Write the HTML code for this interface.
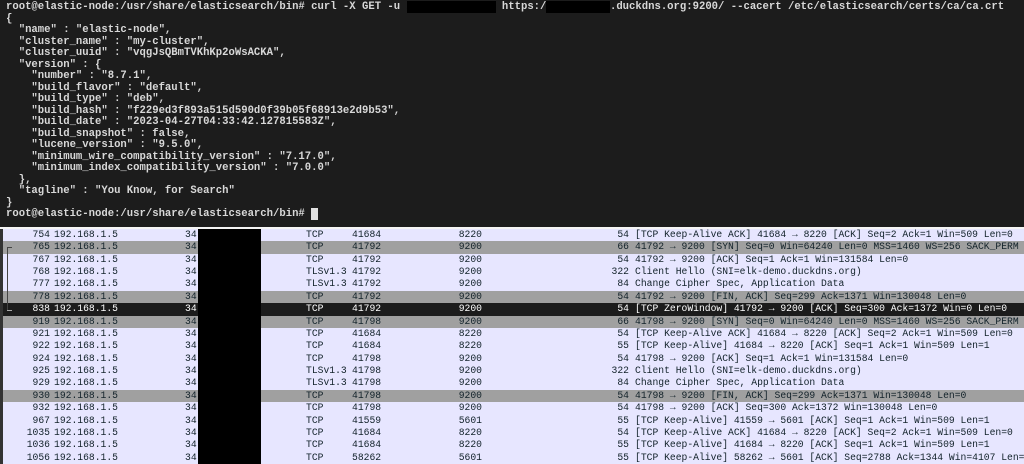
<!DOCTYPE html>
<html><head><style>
body{margin:0;width:1024px;height:464px;overflow:hidden;background:#fff;position:relative}
#term{position:absolute;left:0;top:0;width:1024px;height:227px;background:#1c1c1c;color:#d8d8d8;font:bold 10.6px/11.5px "Liberation Mono",monospace;white-space:pre;padding:2px 0 0 6px;box-sizing:border-box}
.blk{background:#000;color:#000}
#ws{position:absolute;left:0;top:229px;width:1024px;height:235px;background:#e7e6ff}
.r{position:absolute;left:3px;width:1021px;height:12.37px;font:9.7px/12.4px "Liberation Mono",monospace;color:#12222a;white-space:pre}
.r span{position:absolute;top:0}
.g{background:#a0a0a0}
.s{background:#1c1c1c;color:#fff}
</style></head><body>
<div id="term">root@elastic-node:/usr/share/elasticsearch/bin# curl -X GET -u <span class="blk">xxxxxxxxxxxxxx</span> https:/<span class="blk">xxxxxxxxxx</span>.duckdns.org:9200/ --cacert /etc/elasticsearch/certs/ca/ca.crt
{
  "name" : "elastic-node",
  "cluster_name" : "my-cluster",
  "cluster_uuid" : "vqgJsQBmTVKhKp2oWsACKA",
  "version" : {
    "number" : "8.7.1",
    "build_flavor" : "default",
    "build_type" : "deb",
    "build_hash" : "f229ed3f893a515d590d0f39b05f68913e2d9b53",
    "build_date" : "2023-04-27T04:33:42.127815583Z",
    "build_snapshot" : false,
    "lucene_version" : "9.5.0",
    "minimum_wire_compatibility_version" : "7.17.0",
    "minimum_index_compatibility_version" : "7.0.0"
  },
  "tagline" : "You Know, for Search"
}
root@elastic-node:/usr/share/elasticsearch/bin# <span style="background:#e0e0e0"> </span></div>
<div style="position:absolute;left:0;top:227px;width:1024px;height:2px;background:#f4f4f4"></div>
<div id="ws"></div>
<div style="position:absolute;left:0;top:229px;width:3px;height:235px;background:#333"></div>
<div id="rows"></div>
<div style="position:absolute;left:198px;top:229px;width:63px;height:235px;background:#000"></div>
<div style="position:absolute;left:7px;top:247px;width:1px;height:63px;background:#444"></div>
<div style="position:absolute;left:7px;top:247px;width:5px;height:1px;background:#444"></div>
<div style="position:absolute;left:7px;top:310px;width:5px;height:1px;background:#aaa"></div>
<script>
var d=[
["754","41684","8220","TCP","54","[TCP Keep-Alive ACK] 41684 → 8220 [ACK] Seq=2 Ack=1 Win=509 Len=0",""],
["765","41792","9200","TCP","66","41792 → 9200 [SYN] Seq=0 Win=64240 Len=0 MSS=1460 WS=256 SACK_PERM","g"],
["767","41792","9200","TCP","54","41792 → 9200 [ACK] Seq=1 Ack=1 Win=131584 Len=0",""],
["768","41792","9200","TLSv1.3","322","Client Hello (SNI=elk-demo.duckdns.org)",""],
["777","41792","9200","TLSv1.3","84","Change Cipher Spec, Application Data",""],
["778","41792","9200","TCP","54","41792 → 9200 [FIN, ACK] Seq=299 Ack=1371 Win=130048 Len=0","g"],
["838","41792","9200","TCP","54","[TCP ZeroWindow] 41792 → 9200 [ACK] Seq=300 Ack=1372 Win=0 Len=0","s"],
["919","41798","9200","TCP","66","41798 → 9200 [SYN] Seq=0 Win=64240 Len=0 MSS=1460 WS=256 SACK_PERM","g"],
["921","41684","8220","TCP","54","[TCP Keep-Alive ACK] 41684 → 8220 [ACK] Seq=2 Ack=1 Win=509 Len=0",""],
["922","41684","8220","TCP","55","[TCP Keep-Alive] 41684 → 8220 [ACK] Seq=1 Ack=1 Win=509 Len=1",""],
["924","41798","9200","TCP","54","41798 → 9200 [ACK] Seq=1 Ack=1 Win=131584 Len=0",""],
["925","41798","9200","TLSv1.3","322","Client Hello (SNI=elk-demo.duckdns.org)",""],
["929","41798","9200","TLSv1.3","84","Change Cipher Spec, Application Data",""],
["930","41798","9200","TCP","54","41798 → 9200 [FIN, ACK] Seq=299 Ack=1371 Win=130048 Len=0","g"],
["932","41798","9200","TCP","54","41798 → 9200 [ACK] Seq=300 Ack=1372 Win=130048 Len=0",""],
["967","41559","5601","TCP","55","[TCP Keep-Alive] 41559 → 5601 [ACK] Seq=1 Ack=1 Win=509 Len=1",""],
["1035","41684","8220","TCP","54","[TCP Keep-Alive ACK] 41684 → 8220 [ACK] Seq=2 Ack=1 Win=509 Len=0",""],
["1036","41684","8220","TCP","55","[TCP Keep-Alive] 41684 → 8220 [ACK] Seq=1 Ack=1 Win=509 Len=1",""],
["1056","58262","5601","TCP","55","[TCP Keep-Alive] 58262 → 5601 [ACK] Seq=2788 Ack=1344 Win=4107 Len=1",""]];
var h="";
function R(x,t){return '<span style="right:'+(1024-x)+'px">'+t+'</span>';}
function L(x,t){return '<span style="left:'+(x-3)+'px">'+t+'</span>';}
d.forEach(function(r,i){
h+='<div class="r '+r[6]+'" style="top:'+(229+i*12.37)+'px">'+R(50,r[0])+L(54,"192.168.1.5")+L(185,"34")+L(306,r[3])+L(352,r[1])+R(482,r[2])+R(629,r[4])+L(635,r[5])+'</div>';
});
document.getElementById("rows").innerHTML=h;
</script>
</body></html>
